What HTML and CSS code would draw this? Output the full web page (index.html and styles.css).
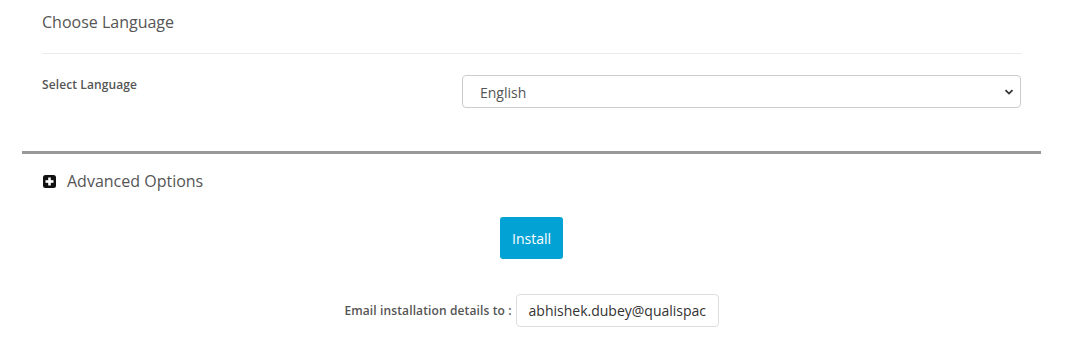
FILE: index.html
```html
<!DOCTYPE html>
<html>
<head>
<meta charset="utf-8">
<link rel="stylesheet" href="styles.css">
</head>
<body>
<div class="page">
  <section class="panel">
    <h2 class="panel-title">Choose Language</h2>
    <div class="form-row">
      <label class="form-label">Select Language</label>
      <div class="select-box">
        <span class="select-value">English</span>
        <svg class="chevron" width="10" height="8" viewBox="0 0 10 8"><path d="M1.5 2.2 L5 5.6 L8.5 2.2" fill="none" stroke="#333" stroke-width="1.8"/></svg>
      </div>
    </div>
  </section>
  <div class="divider"></div>
  <div class="advanced">
    <span class="plus-icon"><svg width="13" height="13" viewBox="0 0 13 13"><rect x="0" y="0" width="13" height="13" rx="2.5" fill="#111"/><rect x="5.2" y="2.5" width="2.6" height="8" fill="#fff"/><rect x="2.5" y="5.2" width="8" height="2.6" fill="#fff"/></svg></span>
    <span class="advanced-label">Advanced Options</span>
  </div>
  <div class="actions">
    <button class="btn-install">Install</button>
  </div>
  <div class="email-row">
    <label class="email-label">Email installation details to :</label>
    <div class="email-input">abhishek.dubey@qualispac</div>
  </div>
</div>
</body>
</html>
```

FILE: styles.css
```css
html, body {
  margin: 0;
  padding: 0;
  background: #fff;
}
body {
  font-family: "Open Sans", "Liberation Sans", sans-serif;
  color: #555;
}
.page {
  width: 1019px;
  margin-left: 22px;
}
.panel {
  padding: 0 20px;
}
.panel-title {
  margin: 0;
  padding-top: 11px;
  padding-bottom: 20px;
  font-size: 16px;
  font-weight: 400;
  line-height: 22px;
  color: #555;
  border-bottom: 1px solid #eaeaea;
}
.form-row {
  display: grid;
  grid-template-columns: 420px 1fr;
  align-items: start;
  padding-top: 21px;
  padding-bottom: 43px;
}
.form-label {
  font-size: 12px;
  font-weight: 600;
  line-height: 18px;
  padding-top: 1px;
  color: #555;
  letter-spacing: 0.1px;
}
.select-box {
  height: 33px;
  box-sizing: border-box;
  border: 1px solid #ccc;
  border-radius: 4px;
  display: flex;
  align-items: center;
  justify-content: space-between;
  padding: 1px 6px 0 17px;
}
.select-value {
  font-size: 14px;
  color: #555;
}
.chevron {
  display: block;
}
.divider {
  height: 3px;
  background: #999;
}
.advanced {
  display: flex;
  align-items: center;
  gap: 11px;
  padding: 16px 20px 0 21px;
  height: 22px;
}
.plus-icon {
  display: flex;
}
.advanced-label {
  font-size: 16px;
  line-height: 22px;
  color: #555;
}
.actions {
  display: flex;
  justify-content: center;
  padding-top: 25px;
}
.btn-install {
  width: 63px;
  height: 42px;
  border: none;
  border-radius: 3px;
  background: #03a2d4;
  color: #fff;
  font-family: "Open Sans", "Liberation Sans", sans-serif;
  font-size: 14px;
  padding: 0;
}
.email-row {
  display: flex;
  align-items: center;
  justify-content: center;
  gap: 4px;
  padding-top: 35px;
}
.email-label {
  font-size: 12px;
  font-weight: 600;
  color: #555;
  letter-spacing: 0.12px;
}
.email-input {
  width: 203px;
  height: 33px;
  box-sizing: border-box;
  border: 1px solid #ddd;
  border-radius: 4px;
  font-size: 14px;
  color: #333;
  padding: 0 0 0 12px;
  line-height: 31px;
  overflow: hidden;
  white-space: nowrap;
}
```
